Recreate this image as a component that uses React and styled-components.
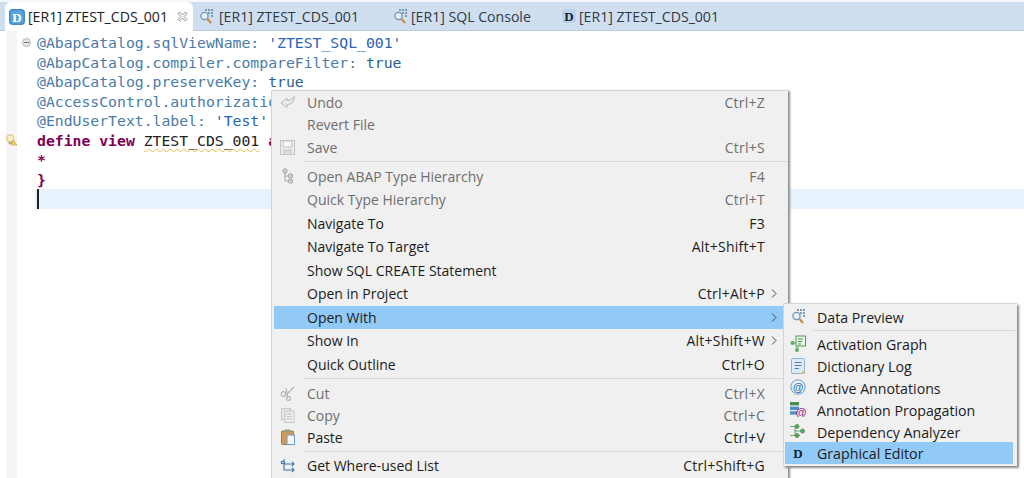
import React from 'react';
import styled, { createGlobalStyle } from 'styled-components';

const GlobalStyle = createGlobalStyle`
  html, body { margin: 0; padding: 0; background: #fff; }
  body { font-family: "Open Sans", "Liberation Sans", sans-serif; }
`;

const Page = styled.div`
  position: relative;
  width: 1024px;
  height: 478px;
  overflow: hidden;
  background: #fff;
`;

const TabBar = styled.div`
  display: flex;
  align-items: flex-end;
  height: 31px;
  box-sizing: border-box;
  padding-left: 5px;
  background: linear-gradient(#f4f7fb 0 2px, #cfdff0 2px);
  border-bottom: 1px solid #bccbdb;
`;

const Tab = styled.div`
  display: flex;
  align-items: center;
  box-sizing: border-box;
  height: 28px;
  width: ${(p) => p.$width}px;
  padding-left: ${(p) => p.$pl}px;
  gap: ${(p) => p.$gap}px;
  font-size: 14.1px;
  color: #303a44;
  background: ${(p) => (p.$active ? '#fff' : 'transparent')};
  border-radius: 6px 6px 0 0;
  ${(p) => p.$active && 'margin-bottom: -1px; height: 29px; color: #222;'}
`;

const CloseMark = styled.span`
  margin-left: 7px;
  display: flex;
`;

const Editor = styled.div`
  display: flex;
  padding: 2px 0 0 6px;
`;

const Ruler = styled.div`
  width: 11px;
  margin-top: -2px;
  padding-top: 2px;
  height: 445px;
  background: #f5f5f5;
`;

const FoldColumn = styled.div`
  width: 18px;
`;

const Marker = styled.div`
  display: flex;
  align-items: center;
  justify-content: ${(p) => p.$align || 'flex-start'};
  height: 19.5px;
`;

const Lines = styled.div`
  flex: 1;
  font-family: "DejaVu Sans Mono", "Liberation Mono", monospace;
  font-size: 14.78px;
  color: #4b7ba6;
`;

const CodeLine = styled.div`
  height: ${(p) => (p.$current ? 20 : 19.5)}px;
  line-height: 19.5px;
  padding-left: 2px;
  white-space: pre;
  position: relative;
  background: ${(p) => (p.$current ? '#e8f2fe' : 'transparent')};
`;

const Caret = styled.span`
  position: absolute;
  left: 2px;
  top: 0;
  width: 2px;
  height: 100%;
  background: #222;
`;

const Str = styled.span`
  color: #2a64b5;
`;
const Lit = styled.span`
  color: #27608f;
`;
const Keyword = styled.span`
  color: #7f0055;
  font-weight: bold;
`;
const Name = styled.span`
  color: #222;
  text-decoration: underline wavy #e6bb45 1px;
  text-underline-offset: 2px;
`;

const Menu = styled.div`
  position: absolute;
  left: 271px;
  top: 90px;
  width: 517px;
  height: 400px;
  box-sizing: border-box;
  padding: 0 0 0 2px;
  background: #f0f0f0;
  border: 1px solid #d4d4d4;
  border-width: 1px 0 0 1px;
  box-shadow: 2px 1px 2px #8c8c8c;
  font-size: 14px;
`;

const Row = styled.div`
  display: flex;
  align-items: center;
  height: ${(p) => p.$h}px;
  margin-right: 2px;
  color: ${(p) => (p.$off ? '#6e6e6e' : '#1c1c1c')};
  background: ${(p) => (p.$on ? '#91c9f7' : 'transparent')};
`;

const IconSlot = styled.span`
  display: flex;
  align-items: center;
  justify-content: center;
  flex: none;
  box-sizing: border-box;
  width: ${(p) => p.$w}px;
  padding-right: ${(p) => p.$pr}px;
`;

const Label = styled.span`
  flex: 1;
  white-space: nowrap;
`;

const SubLabel = styled(Label)`
  padding-top: 2px;
`;

const Shortcut = styled.span`
  white-space: nowrap;
  letter-spacing: 0.25px;
`;

const ArrowSlot = styled.span`
  display: flex;
  align-items: center;
  justify-content: flex-end;
  width: 21px;
  padding-right: 9px;
  box-sizing: border-box;
`;

const Separator = styled.div`
  height: 1px;
  margin: ${(p) => p.$m};
  background: #d8d8d8;
`;

const SubMenu = styled.div`
  position: absolute;
  left: 783px;
  top: 303px;
  width: 234px;
  height: 163px;
  box-sizing: border-box;
  padding: 1px 2px 0 1px;
  background: #f0f0f0;
  border: 1px solid #d4d4d4;
  border-width: 1px 0 0 1px;
  box-shadow: 2px 2px 2px #8c8c8c;
  font-size: 14.2px;
`;

/* icons */
const CdsBadge = () => (
  <svg width="18" height="18" viewBox="0 0 18 18">
    <rect x="1" y="1" width="16" height="16" rx="4" fill="#3d8ac9" />
    <rect x="2.5" y="2.5" width="13" height="13" rx="3" fill="#5aa5dd" />
    <text x="9" y="13.5" textAnchor="middle" fontFamily="Liberation Serif" fontWeight="bold" fontSize="13" fill="#fff">D</text>
  </svg>
);

const GraphicalBadge = ({ plate }) => (
  <svg width="14" height="16" viewBox="0 0 14 16">
    {plate && <rect x="0" y="1" width="14" height="14" rx="3" fill="#b9d3ec" />}
    <text x="7" y="12.5" textAnchor="middle" fontFamily="Liberation Serif" fontWeight="bold" fontSize="13" fill="#14202c">D</text>
  </svg>
);

const CloseIcon = () => (
  <svg width="11" height="11" viewBox="0 0 11 11" fill="#fff" stroke="#8d8d8d" strokeWidth="1">
    <path d="M1 2.5 L2.5 1 L5.5 4 L8.5 1 L10 2.5 L7 5.5 L10 8.5 L8.5 10 L5.5 7 L2.5 10 L1 8.5 L4 5.5 Z" />
  </svg>
);

const SqlIcon = () => (
  <svg width="15" height="17" viewBox="0 0 15 17">
    <g fill="#7b9cb8">
      <rect x="6" y="1" width="2" height="2" /><rect x="9" y="1" width="2" height="2" /><rect x="12" y="1" width="2" height="2" />
      <rect x="9" y="4" width="2" height="2" /><rect x="12" y="4" width="2" height="2" />
      <rect x="12" y="7" width="2" height="2" />
    </g>
    <circle cx="5.5" cy="8" r="3.6" fill="#e8f1f8" stroke="#6f96b5" strokeWidth="1.3" />
    <path d="M8.5 11 L12 15" stroke="#c98a4a" strokeWidth="2.2" />
  </svg>
);

const FoldIcon = () => (
  <svg width="9" height="9" viewBox="0 0 9 9">
    <circle cx="4.5" cy="4.5" r="4" fill="#e6e6e6" stroke="#b5b5b5" />
    <rect x="2" y="4" width="5" height="1" fill="#777" />
  </svg>
);

const BulbIcon = () => (
  <svg width="13" height="14" viewBox="0 0 13 14">
    <circle cx="5" cy="5" r="4.3" fill="#fdf0bb" stroke="#d2b357" />
    <rect x="3" y="9" width="4" height="3" fill="#b5ad98" />
    <path d="M9 7 L13 13 L6 13 Z" fill="#f5cf56" stroke="#a8862a" strokeWidth="0.5" />
  </svg>
);

const UndoIcon = () => (
  <svg width="16" height="14" viewBox="0 0 16 14" fill="#ececec" stroke="#b4b4b4">
    <path d="M1 8 L7 3 V5.5 C10 5.5 12 4.5 14 1.5 C15 6 12 9.5 7 9.5 V12.5 Z" />
  </svg>
);

const SaveIcon = () => (
  <svg width="15" height="15" viewBox="0 0 15 15" fill="none" stroke="#c4c4c4">
    <rect x="0.5" y="0.5" width="14" height="14" fill="#ececec" />
    <rect x="3" y="1" width="9" height="6" fill="#f6f6f6" />
    <rect x="4" y="10" width="7" height="4.5" fill="#dcdcdc" />
  </svg>
);

const HierarchyIcon = () => (
  <svg width="12" height="16" viewBox="0 0 12 16" fill="#cfcfcf" stroke="#a6a6a6">
    <path d="M3 4 V13 H7 M3 8 H7" fill="none" />
    <circle cx="3" cy="3" r="2.2" />
    <circle cx="8.5" cy="8" r="2.2" />
    <circle cx="8.5" cy="13" r="2.2" />
  </svg>
);

const CutIcon = () => (
  <svg width="15" height="15" viewBox="0 0 15 15" fill="none" stroke="#b4b4b4" strokeWidth="1.2">
    <path d="M14 1 L6 9 M8 12 L6 2" />
    <circle cx="3.5" cy="8" r="2.3" />
    <circle cx="8.5" cy="12.5" r="2" />
  </svg>
);

const CopyIcon = () => (
  <svg width="14" height="15" viewBox="0 0 14 15" fill="#e6e6e6" stroke="#c6c6c6">
    <rect x="0.5" y="0.5" width="9" height="11" />
    <rect x="4" y="3" width="9" height="11.5" fill="#ededed" />
    <path d="M6 6 H11 M6 8.5 H11 M6 11 H11" />
  </svg>
);

const PasteIcon = () => (
  <svg width="14" height="16" viewBox="0 0 14 16">
    <rect x="0.5" y="2" width="12" height="13.5" rx="1" fill="#d49a55" stroke="#a87a42" />
    <rect x="4" y="0.5" width="5" height="3" fill="#8a9aa8" />
    <rect x="6" y="6" width="7.5" height="9.5" fill="#f2f7fb" stroke="#6d9cc5" />
  </svg>
);

const WhereUsedIcon = () => (
  <svg width="15" height="15" viewBox="0 0 15 15" fill="none" stroke="#3f74ab" strokeWidth="1.1">
    <path d="M4 1 V12 H14 M4 6 H14" />
    <rect x="1.5" y="3.5" width="3" height="2" fill="#fff" />
    <path d="M12 4 L14 6 L12 8 M12 10 L14 12 L12 14" />
  </svg>
);

const ActivationIcon = () => (
  <svg width="16" height="17" viewBox="0 0 16 17">
    <rect x="6" y="1" width="9.5" height="10" fill="#eef6ea" stroke="#4f9a52" />
    <path d="M8 4 H13 M8 6.5 H12 M8 9 H11" stroke="#3f8c43" />
    <path d="M3 8 H6 M7 11 V14" stroke="#4f9a52" />
    <circle cx="2.5" cy="8" r="2" fill="#5cae5c" />
    <circle cx="7" cy="15" r="2" fill="#5cae5c" />
  </svg>
);

const LogIcon = () => (
  <svg width="14" height="16" viewBox="0 0 14 16">
    <rect x="0.5" y="0.5" width="13" height="15" rx="1.5" fill="#dcebf7" stroke="#8fb4d3" />
    <path d="M3.5 4.5 H10.5 M3.5 7.5 H10.5 M3.5 10.5 H8" stroke="#4f7ea6" strokeWidth="1.2" />
    <path d="M9.5 15.5 L13.5 11.5 V15.5 Z" fill="#e2b97f" />
  </svg>
);

const AtIcon = () => (
  <svg width="16" height="16" viewBox="0 0 16 16">
    <circle cx="8" cy="8" r="7.2" fill="#e6f0f9" stroke="#6d9cc5" />
    <text x="8" y="11.5" textAnchor="middle" fontFamily="Liberation Sans" fontSize="11" fontWeight="bold" fill="#3a75ad">@</text>
  </svg>
);

const PropagationIcon = () => (
  <svg width="17" height="16" viewBox="0 0 17 16">
    <rect x="0" y="1" width="9" height="3.4" fill="#4d8a4f" />
    <rect x="0" y="5.6" width="9" height="3.4" fill="#4f8fc6" />
    <rect x="0" y="10.2" width="7" height="3.4" fill="#4f8fc6" />
    <text x="11" y="14.5" textAnchor="middle" fontFamily="Liberation Sans" fontSize="11" fontWeight="bold" fill="#a3258f">@</text>
  </svg>
);

const DependencyIcon = () => (
  <svg width="17" height="16" viewBox="0 0 17 16" fill="#5aa65c" stroke="#4b8c4d" strokeWidth="0.8">
    <path d="M0 3.5 H5 M5 3.5 V12.5 M0 12.5 H10 M5 8 H11" fill="none" />
    <circle cx="7" cy="3.5" r="2" />
    <circle cx="12.5" cy="8" r="2" />
    <circle cx="7" cy="12.5" r="2" />
  </svg>
);

const Chevron = () => (
  <svg width="6" height="9" viewBox="0 0 6 9" fill="none" stroke="#444" strokeWidth="1">
    <path d="M1 0.5 L5 4.5 L1 8.5" />
  </svg>
);

const menuGroups = [
  {
    h: 22.5,
    sep: '2.5px 0 2.5px 30px',
    items: [
      { label: 'Undo', key: 'Ctrl+Z', off: true, icon: <UndoIcon /> },
      { label: 'Revert File', off: true },
      { label: 'Save', key: 'Ctrl+S', off: true, icon: <SaveIcon /> },
    ],
  },
  {
    h: 23.5,
    sep: '2px 0 3px 30px',
    items: [
      { label: 'Open ABAP Type Hierarchy', key: 'F4', off: true, icon: <HierarchyIcon /> },
      { label: 'Quick Type Hierarchy', key: 'Ctrl+T', off: true },
      { label: 'Navigate To', key: 'F3' },
      { label: 'Navigate To Target', key: 'Alt+Shift+T' },
      { label: 'Show SQL CREATE Statement' },
      { label: 'Open in Project', key: 'Ctrl+Alt+P', arrow: true },
      { label: 'Open With', arrow: true, on: true },
      { label: 'Show In', key: 'Alt+Shift+W', arrow: true },
      { label: 'Quick Outline', key: 'Ctrl+O' },
    ],
  },
  {
    h: 22,
    sep: '2.5px 0 2.5px 30px',
    items: [
      { label: 'Cut', key: 'Ctrl+X', off: true, icon: <CutIcon /> },
      { label: 'Copy', key: 'Ctrl+C', off: true, icon: <CopyIcon /> },
      { label: 'Paste', key: 'Ctrl+V', icon: <PasteIcon /> },
    ],
  },
  {
    h: 23,
    items: [{ label: 'Get Where-used List', key: 'Ctrl+Shift+G', icon: <WhereUsedIcon /> }],
  },
];

const subItems = [
  { label: 'Activation Graph', icon: <ActivationIcon /> },
  { label: 'Dictionary Log', icon: <LogIcon /> },
  { label: 'Active Annotations', icon: <AtIcon /> },
  { label: 'Annotation Propagation', icon: <PropagationIcon /> },
  { label: 'Dependency Analyzer', icon: <DependencyIcon /> },
  { label: 'Graphical Editor', icon: <GraphicalBadge />, on: true },
];

const App = () => (
  <Page>
    <GlobalStyle />
    <TabBar>
      <Tab $active $width={188} $pl={3} $gap={2}>
        <CdsBadge />
        <span>[ER1] ZTEST_CDS_001</span>
        <CloseMark><CloseIcon /></CloseMark>
      </Tab>
      <Tab $width={195} $pl={6} $gap={5}><SqlIcon /><span>[ER1] ZTEST_CDS_001</span></Tab>
      <Tab $width={169} $pl={5} $gap={3}><SqlIcon /><span>[ER1] SQL Console</span></Tab>
      <Tab $width={170} $pl={5} $gap={3}><GraphicalBadge plate /><span>[ER1] ZTEST_CDS_001</span></Tab>
    </TabBar>
    <Editor>
      <Ruler>
        {Array.from({ length: 9 }).map((_, i) => (
          <Marker key={i}>{i === 5 && <BulbIcon />}</Marker>
        ))}
      </Ruler>
      <FoldColumn>
        <Marker $align="center"><FoldIcon /></Marker>
      </FoldColumn>
      <Lines>
        <CodeLine>@AbapCatalog.sqlViewName: <Str>'ZTEST_SQL_001'</Str></CodeLine>
        <CodeLine>@AbapCatalog.compiler.compareFilter: <Lit>true</Lit></CodeLine>
        <CodeLine>@AbapCatalog.preserveKey: <Lit>true</Lit></CodeLine>
        <CodeLine>@AccessControl.authorizationCheck: #CHECK</CodeLine>
        <CodeLine>@EndUserText.label: <Str>'Test'</Str></CodeLine>
        <CodeLine><Keyword>define view</Keyword> <Name>ZTEST_CDS_001</Name> <Keyword>as select from</Keyword></CodeLine>
        <CodeLine><Keyword>*</Keyword></CodeLine>
        <CodeLine><Keyword>{'}'}</Keyword></CodeLine>
        <CodeLine $current><Caret /></CodeLine>
      </Lines>
    </Editor>
    <Menu>
      {menuGroups.map((group) => (
        <div key={group.items[0].label}>
          {group.items.map((item) => (
            <Row key={item.label} $h={group.h} $off={item.off} $on={item.on}>
              <IconSlot $w={33} $pr={6}>{item.icon}</IconSlot>
              <Label>{item.label}</Label>
              {item.key && <Shortcut>{item.key}</Shortcut>}
              <ArrowSlot>{item.arrow && <Chevron />}</ArrowSlot>
            </Row>
          ))}
          {group.sep && <Separator $m={group.sep} />}
        </div>
      ))}
    </Menu>
    <SubMenu>
      <Row $h={22}>
        <IconSlot $w={32} $pr={6}><SqlIcon /></IconSlot>
        <SubLabel>Data Preview</SubLabel>
      </Row>
      <Separator $m="2.5px 0 2.5px 28px" />
      {subItems.map((item) => (
        <Row key={item.label} $h={21.8} $on={item.on}>
          <IconSlot $w={32} $pr={6}>{item.icon}</IconSlot>
          <SubLabel>{item.label}</SubLabel>
        </Row>
      ))}
    </SubMenu>
  </Page>
);

export default App;
